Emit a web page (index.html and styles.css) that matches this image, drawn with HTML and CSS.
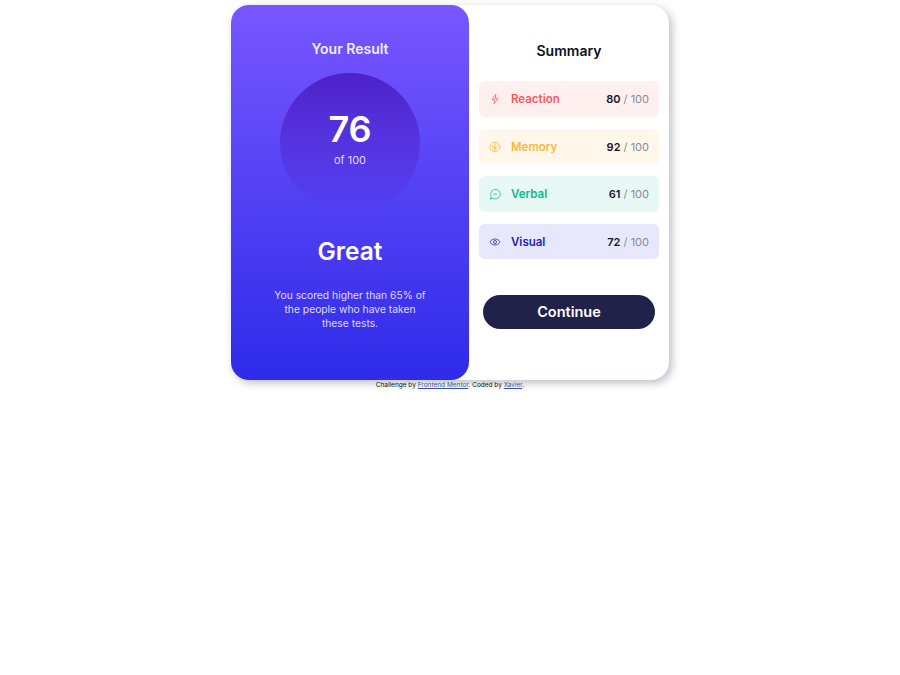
FILE: index.html
```html
<!DOCTYPE html>
<html lang="en">
<head>
    <meta charset="UTF-8">
    <meta name="viewport" content="width=device-width, initial-scale=1.0">
    <title>Results summary</title>
    <link rel="stylesheet" href="styles.css">
</head>
<body>
    <main class="card">
        <section class="result">
            <h2 class="result-title">Your Result</h2>
            <div class="score-circle">
                <span class="score">76</span>
                <span class="score-of">of 100</span>
            </div>
            <h1 class="verdict">Great</h1>
            <p class="result-text">You scored higher than 65% of the people who have taken these tests.</p>
        </section>

        <section class="summary">
            <h2 class="summary-title">Summary</h2>
            <ul class="rows">
                <li class="row row-reaction">
                    <svg class="icon" viewBox="0 0 20 20" fill="none" stroke="currentColor" stroke-width="1.25" stroke-linejoin="round">
                        <path d="M11.5 2 5 11h4.500l-1 7 6.500-9h-4.500z"/>
                    </svg>
                    <span class="row-name">Reaction</span>
                    <span class="row-score"><b>80</b> <i>/</i> 100</span>
                </li>
                <li class="row row-memory">
                    <svg class="icon" viewBox="0 0 20 20" fill="none" stroke="currentColor" stroke-width="1.25" stroke-linecap="round">
                        <circle cx="10" cy="10" r="8"/>
                        <path d="M10 2.500v15M5 8.500c2 0 3.500.5 5 2M15 8.500c-2 0-3.500.5-5 2M6 13c1.500-.5 2.500-.5 4 0M14 13c-1.500-.5-2.500-.5-4 0"/>
                    </svg>
                    <span class="row-name">Memory</span>
                    <span class="row-score"><b>92</b> <i>/</i> 100</span>
                </li>
                <li class="row row-verbal">
                    <svg class="icon" viewBox="0 0 20 20" fill="none" stroke="currentColor" stroke-width="1.25" stroke-linecap="round" stroke-linejoin="round">
                        <path d="M2.500 18 3.800 14.300A8 8 0 1 1 6.800 17.300z"/>
                        <path d="M7.500 10h5"/>
                    </svg>
                    <span class="row-name">Verbal</span>
                    <span class="row-score"><b>61</b> <i>/</i> 100</span>
                </li>
                <li class="row row-visual">
                    <svg class="icon" viewBox="0 0 20 20" fill="none" stroke="currentColor" stroke-width="1.25" stroke-linejoin="round">
                        <path d="M1.500 10c2-3.500 5-5 8.500-5s6.500 1.500 8.500 5c-2 3.500-5 5-8.500 5s-6.500-1.500-8.500-5z"/>
                        <circle cx="10" cy="10" r="2.600"/>
                    </svg>
                    <span class="row-name">Visual</span>
                    <span class="row-score"><b>72</b> <i>/</i> 100</span>
                </li>
            </ul>
            <button class="continue">Continue</button>
        </section>
    </main>

    <footer class="attribution">
        Challenge by <a href="#">Frontend Mentor</a>. Coded by <a href="#">Xavier</a>.
    </footer>
</body>
</html>
```

FILE: styles.css
```css
* {
    box-sizing: border-box;
}

body {
    margin: 0;
    padding-top: 5px;
    font-family: "Inter", "Liberation Sans", sans-serif;
    background-color: white;
}

.card {
    display: flex;
    width: 438px;
    height: 375px;
    margin: 0 auto;
    border-radius: 18px;
    background-color: white;
    box-shadow: 3px 3px 8px rgba(40, 45, 70, 0.3);
}

.result {
    display: flex;
    flex-direction: column;
    align-items: center;
    width: 238px;
    padding-top: 35px;
    border-radius: 18px;
    background-image: linear-gradient(#7857ff, #2e2be9);
    color: white;
}

.result-title {
    margin: 0;
    font-size: 14px;
    line-height: 18px;
    font-weight: 600;
    color: #f0eeff;
}

.score-circle {
    display: flex;
    flex-direction: column;
    align-items: center;
    justify-content: center;
    width: 140px;
    height: 140px;
    margin-top: 15px;
    padding-bottom: 10px;
    border-radius: 50%;
    background-image: linear-gradient(#4d21c9, rgba(37, 33, 201, 0));
}

.score {
    font-size: 36px;
    line-height: 40px;
    font-weight: 600;
}

.score-of {
    margin-top: 4px;
    font-size: 11px;
    line-height: 14px;
    color: #e0dbff;
}

.verdict {
    margin: 23px 0 0;
    font-size: 24.500px;
    line-height: 30px;
    font-weight: 600;
}

.result-text {
    width: 158px;
    margin: 22px 0 0;
    font-size: 10.300px;
    line-height: 14px;
    text-align: center;
    color: #e0dcff;
}

.summary {
    display: flex;
    flex-direction: column;
    flex: 1;
    padding: 36px 10px 0;
}

.summary-title {
    margin: 0;
    font-size: 14px;
    line-height: 20px;
    font-weight: 600;
    text-align: center;
    color: #0f0f1e;
}

.rows {
    display: flex;
    flex-direction: column;
    gap: 12px;
    margin: 20px 0 0;
    padding: 0;
    list-style: none;
}

.row {
    display: flex;
    align-items: center;
    height: 35.500px;
    padding: 1px 10px 0;
    border-radius: 6px;
    font-size: 11.500px;
}

.icon {
    width: 12px;
    height: 12px;
    margin-right: 10px;
}

.row-name {
    flex: 1;
    font-weight: 600;
}

.row-score {
    font-size: 11px;
    color: #8a8a96;
}

.row-score b {
    font-weight: 600;
    color: #15152b;
}

.row-score i {
    font-style: normal;
}

.row-reaction {
    background-color: #fff0f0;
    color: #f25c5c;
}

.row-memory {
    background-color: #fff8ea;
    color: #f9b93a;
}

.row-verbal {
    background-color: #e8f8f4;
    color: #12b58f;
}

.row-visual {
    background-color: #e7e8fb;
    color: #2023b8;
}

.continue {
    width: 172px;
    height: 34px;
    margin: 36px auto 0;
    padding: 0 0 2px;
    border: none;
    border-radius: 17px;
    background-color: #21224a;
    color: white;
    font-family: inherit;
    font-size: 14.500px;
    font-weight: 600;
    cursor: pointer;
}

.attribution {
    padding-top: 1px;
    font-size: 6.500px;
    line-height: 9px;
    text-align: center;
    color: #111;
}

.attribution a {
    color: #3e52a3;
}
```
